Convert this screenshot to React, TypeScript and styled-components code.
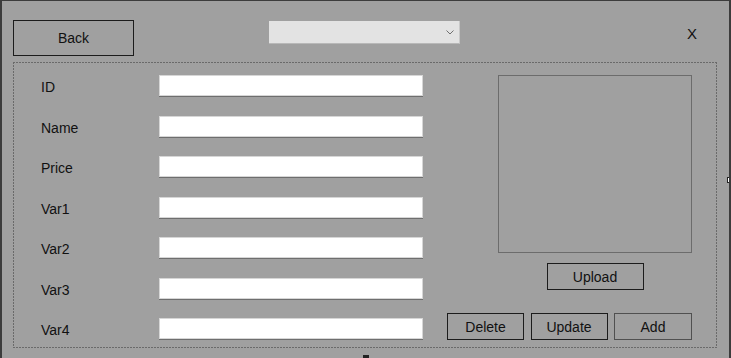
import React from "react";
import styled, { createGlobalStyle } from "styled-components";

const Global = createGlobalStyle`
  html, body { margin: 0; padding: 0; background: #a0a0a0; }
  body { font-family: "Liberation Sans", Arial, sans-serif; }
  * { box-sizing: border-box; }
`;

const Window = styled.div`
  position: relative;
  width: 731px;
  height: 358px;
  background: #a0a0a0;
  border-top: 1px solid #3c3c3c;
  border-left: 2px solid #3c3c3c;
  border-right: 2px solid #3c3c3c;
  padding: 19px 0 0 11px;
  display: flex;
  flex-direction: column;
  font-size: 14px;
  color: #111;
  overflow: hidden;
`;

const Header = styled.div`
  display: flex;
  align-items: flex-start;
  height: 36px;
`;

const FrameButton = styled.button<{ $w: number; $h: number; $muted?: boolean }>`
  width: ${(p) => p.$w}px;
  height: ${(p) => p.$h}px;
  background: transparent;
  border: 1px solid ${(p) => (p.$muted ? "#505050" : "#1c1c1c")};
  font-family: "Liberation Sans", Arial, sans-serif;
  font-size: 14px;
  color: #111;
  padding: 0;
  display: flex;
  align-items: center;
  justify-content: center;
`;

const Combo = styled.div`
  margin: 1px 0 0 135px;
  width: 191px;
  height: 23px;
  background: #e3e3e3;
  border-bottom: 1px solid #b8b8b8;
  border-right: 1px solid #c8c8c8;
  display: flex;
  align-items: center;
  justify-content: flex-end;
  padding-right: 5px;
`;

const Close = styled.div`
  margin: 6px 0 0 227px;
  font-size: 15px;
  line-height: 16px;
  color: #111;
`;

const Panel = styled.div`
  margin-top: 6px;
  width: 704px;
  height: 286px;
  position: relative;
  display: flex;
  justify-content: space-between;
  padding: 13px 25px 0 28px;
  background-image:
    repeating-linear-gradient(90deg, #6a6a6a 0 2px, transparent 2px 3px),
    repeating-linear-gradient(90deg, #6a6a6a 0 2px, transparent 2px 3px),
    repeating-linear-gradient(180deg, #6a6a6a 0 2px, transparent 2px 3px),
    repeating-linear-gradient(180deg, #6a6a6a 0 2px, transparent 2px 3px);
  background-size: 100% 1px, 100% 1px, 1px 100%, 1px 100%;
  background-position: 0 0, 0 100%, 0 0, 100% 0;
  background-repeat: no-repeat;
`;

const Form = styled.div`
  display: flex;
  flex-direction: column;
  gap: 19.5px;
`;

const Row = styled.div`
  display: flex;
  align-items: center;
  height: 21px;
`;

const Label = styled.div`
  width: 118px;
  padding-top: 3px;
  line-height: 16px;
`;

const Field = styled.div`
  width: 264px;
  height: 21px;
  background: #fff;
  border: 1px solid #d6d6d6;
  box-shadow: 0 1px 0 #6e6e6e;
`;

const Side = styled.div`
  width: 245px;
  display: flex;
  flex-direction: column;
  align-items: flex-end;
`;

const Picture = styled.div`
  width: 194px;
  height: 178px;
  border: 1px solid #6c6c6c;
`;

const UploadWrap = styled.div`
  width: 194px;
  display: flex;
  justify-content: center;
  margin-top: 10px;
`;

const Actions = styled.div`
  margin-top: 23px;
  display: flex;
  gap: 6.5px;
`;

const Handle = styled.div<{ $x: number; $y: number; $w: number; $h: number; $c: string }>`
  position: absolute;
  left: ${(p) => p.$x}px;
  top: ${(p) => p.$y}px;
  width: ${(p) => p.$w}px;
  height: ${(p) => p.$h}px;
  background: ${(p) => p.$c};
  border: 1px solid #222;
`;

const labels = ["ID", "Name", "Price", "Var1", "Var2", "Var3", "Var4"];

export default function App() {
  return (
    <>
      <Global />
      <Window>
        <Header>
          <FrameButton $w={121} $h={36}>Back</FrameButton>
          <Combo>
            <svg width="8" height="5" viewBox="0 0 8 5">
              <path d="M0.5 0.5 L4 4 L7.5 0.5" fill="none" stroke="#707070" strokeWidth="1" />
            </svg>
          </Combo>
          <Close>X</Close>
        </Header>
        <Panel>
          <Form>
            {labels.map((l) => (
              <Row key={l}>
                <Label>{l}</Label>
                <Field />
              </Row>
            ))}
          </Form>
          <Side>
            <Picture />
            <UploadWrap>
              <FrameButton $w={97} $h={27}>Upload</FrameButton>
            </UploadWrap>
            <Actions>
              <FrameButton $w={77} $h={27}>Delete</FrameButton>
              <FrameButton $w={77} $h={27}>Update</FrameButton>
              <FrameButton $w={78} $h={27} $muted>Add</FrameButton>
            </Actions>
          </Side>
        </Panel>
        <Handle $x={725} $y={176} $w={5} $h={6} $c="#fff" />
        <Handle $x={361} $y={354} $w={6} $h={6} $c="#222" />
      </Window>
    </>
  );
}
